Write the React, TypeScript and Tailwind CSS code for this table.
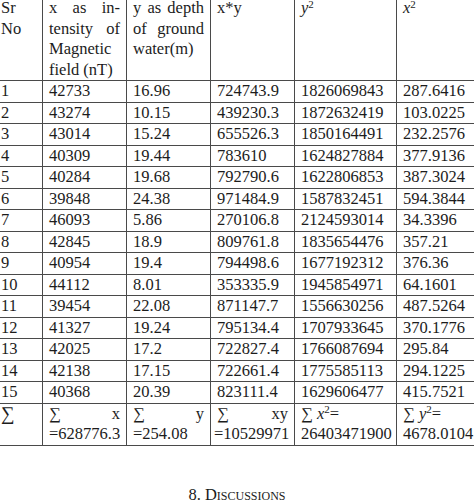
import React from "react"

// data table from the paper, rows 1..15
const rows: string[][] = [
  ["1", "42733", "16.96", "724743.9", "1826069843", "287.6416"],
  ["2", "43274", "10.15", "439230.3", "1872632419", "103.0225"],
  ["3", "43014", "15.24", "655526.3", "1850164491", "232.2576"],
  ["4", "40309", "19.44", "783610", "1624827884", "377.9136"],
  ["5", "40284", "19.68", "792790.6", "1622806853", "387.3024"],
  ["6", "39848", "24.38", "971484.9", "1587832451", "594.3844"],
  ["7", "46093", "5.86", "270106.8", "2124593014", "34.3396"],
  ["8", "42845", "18.9", "809761.8", "1835654476", "357.21"],
  ["9", "40954", "19.4", "794498.6", "1677192312", "376.36"],
  ["10", "44112", "8.01", "353335.9", "1945854971", "64.1601"],
  ["11", "39454", "22.08", "871147.7", "1556630256", "487.5264"],
  ["12", "41327", "19.24", "795134.4", "1707933645", "370.1776"],
  ["13", "42025", "17.2", "722827.4", "1766087694", "295.84"],
  ["14", "42138", "17.15", "722661.4", "1775585113", "294.1225"],
  ["15", "40368", "20.39", "823111.4", "1629606477", "415.7521"],
]

const cell = "border border-[#4a4a4a] px-[6px] py-0 align-top whitespace-nowrap"

function Spread({ words }: { words: string[] }) {
  return (
    <div className="flex justify-between">
      {words.map((w, i) => (
        <span key={i}>{w}</span>
      ))}
    </div>
  )
}

function Sq({ v }: { v: string }) {
  return (
    <span className="italic">
      {v}
      <sup className="text-[11px] not-italic">2</sup>
    </span>
  )
}

export default function App() {
  return (
    <div className="w-[474px] h-[504px] overflow-hidden bg-white text-[#1c1c1c] font-['Liberation_Serif',_serif]">
      <table className="table-fixed w-[512px] border-collapse ml-[-6px] mt-[-3px] text-[16.5px] leading-[20.5px]">
        <colgroup>
          <col className="w-[48px]" />
          <col className="w-[84px]" />
          <col className="w-[84px]" />
          <col className="w-[84px]" />
          <col className="w-[102px]" />
          <col className="w-[110px]" />
        </colgroup>
        <thead>
          <tr>
            <td className={cell}>
              <div>Sr</div>
              <div>No</div>
            </td>
            <td className={cell}>
              <Spread words={["x", "as", "in-"]} />
              <Spread words={["tensity", "of"]} />
              <div>Magnetic</div>
              <div>field (nT)</div>
            </td>
            <td className={cell}>
              <Spread words={["y", "as", "depth"]} />
              <Spread words={["of", "ground"]} />
              <div>water(m)</div>
              <div>&nbsp;</div>
            </td>
            <td className={cell}>x*y</td>
            <td className={cell}>
              <Sq v="y" />
            </td>
            <td className={cell}>
              <Sq v="x" />
            </td>
          </tr>
        </thead>
        <tbody>
          {rows.map((r) => (
            <tr key={r[0]} className="h-[21.5px]">
              {r.map((c, i) => (
                <td key={i} className={cell}>
                  {c}
                </td>
              ))}
            </tr>
          ))}
          <tr>
            <td className={cell + " text-[19px]"}>∑</td>
            <td className={cell}>
              <Spread words={["∑", "x"]} />
              <div>=628776.3</div>
            </td>
            <td className={cell}>
              <Spread words={["∑", "y"]} />
              <div>=254.08</div>
            </td>
            <td className={cell + " overflow-visible"}>
              <Spread words={["∑", "xy"]} />
              <div className="ml-[-3px]">=10529971</div>
            </td>
            <td className={cell}>
              <div>
                ∑ <Sq v="x" />=
              </div>
              <div>26403471900</div>
            </td>
            <td className={cell}>
              <div>
                ∑ <Sq v="y" />=
              </div>
              <div>4678.0104</div>
            </td>
          </tr>
        </tbody>
      </table>
      <div className="mt-[38px] text-center text-[16.5px] leading-[22px] [font-variant:small-caps]">
        8. Discussions
      </div>
    </div>
  )
}
